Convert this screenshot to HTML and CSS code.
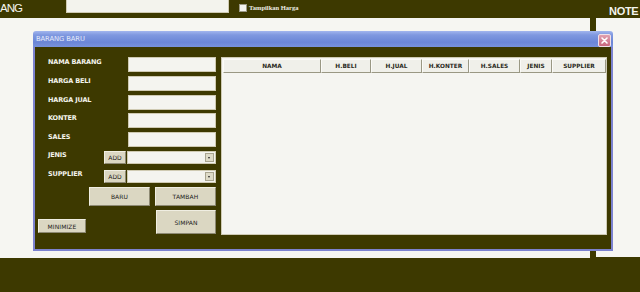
FILE: index.html
```html
<!DOCTYPE html>
<html>
<head>
<meta charset="utf-8">
<link rel="stylesheet" href="styles.css">
</head>
<body>
<div class="screen">
  <div class="topbar">
    <div class="cut-title">ANG</div>
    <div class="search"></div>
    <div class="check"><span class="box"></span><span class="check-label">Tampilkan Harga</span></div>
    <div class="note-title">NOTE</div>
  </div>
  <div class="main">
    <div class="panel-left"></div>
    <div class="panel-right"></div>
  </div>

  <div class="dialog">
    <div class="titlebar">
      <span class="title">BARANG BARU</span>
      <span class="close">
        <svg width="11" height="11" viewBox="0 0 11 11"><path d="M3 3 L8 8 M8 3 L3 8" stroke="#fff" stroke-width="1.6" stroke-linecap="round"/></svg>
      </span>
    </div>
    <div class="body">
      <div class="form">
        <div class="row r1"><span class="label">NAMA BARANG</span><span class="field"></span></div>
        <div class="row r2"><span class="label">HARGA BELI</span><span class="field"></span></div>
        <div class="row r3"><span class="label">HARGA JUAL</span><span class="field"></span></div>
        <div class="row r4"><span class="label">KONTER</span><span class="field"></span></div>
        <div class="row r5"><span class="label">SALES</span><span class="field"></span></div>
        <div class="row r6"><span class="label">JENIS</span><span class="btn add">ADD</span><span class="combo"><span class="arrow"></span></span></div>
        <div class="row r7"><span class="label">SUPPLIER</span><span class="btn add">ADD</span><span class="combo"><span class="arrow"></span></span></div>
        <div class="row r8"><span class="btn wide">BARU</span><span class="btn wide">TAMBAH</span></div>
        <div class="row r9"><span class="btn mini">MINIMIZE</span><span class="btn wide simpan">SIMPAN</span></div>
      </div>
      <div class="grid">
        <div class="head">
          <span class="th c1">NAMA</span>
          <span class="th c2">H.BELI</span>
          <span class="th c3">H.JUAL</span>
          <span class="th c4">H.KONTER</span>
          <span class="th c5">H.SALES</span>
          <span class="th c6">JENIS</span>
          <span class="th c7">SUPPLIER</span>
        </div>
      </div>
    </div>
  </div>
</div>
</body>
</html>
```

FILE: styles.css
```css
html, body {
  margin: 0;
  padding: 0;
}
body {
  background: #3d3900;
  width: 640px;
  height: 292px;
  overflow: hidden;
  font-family: "DejaVu Sans", Verdana, sans-serif;
}
.screen {
  position: relative;
  width: 640px;
  height: 292px;
  overflow: hidden;
}
.topbar {
  height: 18px;
  display: flex;
  align-items: flex-start;
}
.cut-title {
  width: 20px;
  font-family: "Liberation Sans", Arial, sans-serif;
  font-size: 11.5px;
  letter-spacing: -1px;
  color: #f4f4ee;
  line-height: 14px;
  padding-top: 1px;
  white-space: nowrap;
}
.search {
  margin-left: 46px;
  width: 161px;
  height: 12px;
  background: #f3f3ed;
  border: 1px solid #cfcab2;
  border-top: none;
}
.check {
  margin-left: 10px;
  margin-top: 4px;
  display: flex;
  align-items: center;
  gap: 2px;
}
.box {
  width: 6px;
  height: 6px;
  background: #f4f4f0;
  border: 1px solid #9c9a88;
}
.check-label {
  font-family: "Liberation Serif", "Times New Roman", serif;
  font-weight: bold;
  font-size: 6.5px;
  color: #ecece4;
  line-height: 8px;
}
.note-title {
  margin-left: auto;
  margin-top: 4px;
  font-family: "Liberation Sans", Arial, sans-serif;
  font-weight: bold;
  font-size: 11px;
  letter-spacing: -0.3px;
  color: #f4f4ee;
  line-height: 14px;
  width: 31px;
  white-space: nowrap;
}
.main {
  display: flex;
  gap: 6px;
}
.panel-left {
  width: 590px;
  height: 240px;
  background: #f6f6f2;
}
.panel-right {
  width: 44px;
  height: 239px;
  background: #f6f6f2;
}

/* dialog window on the desktop */
.dialog {
  position: absolute;
  left: 33px;
  top: 31px;
  width: 580px;
}
.titlebar {
  height: 16px;
  border-radius: 3px 3px 0 0;
  background: linear-gradient(#a2b6ee 0%, #7f98e0 25%, #6b86d6 70%, #7892dc 100%);
  display: flex;
  align-items: center;
  justify-content: space-between;
  padding: 0 2px 0 3px;
}
.title {
  font-family: "DejaVu Sans", Verdana, sans-serif;
  font-size: 6.8px;
  color: #e4eafa;
  letter-spacing: -0.1px;
}
.close {
  width: 11px;
  height: 11px;
  background: linear-gradient(#e0a0b0, #c8687e);
  border: 1px solid #f0e0e8;
  border-radius: 2px;
  display: flex;
  margin-top: 2px;
}
.body {
  background: #3d3900;
  border: 2px solid #7c82cf;
  border-top: none;
  height: 190px;
  display: flex;
  padding: 10px 4px 2px 3px;
  gap: 5px;
}
.form {
  width: 178px;
  display: flex;
  flex-direction: column;
}
.row {
  display: flex;
  align-items: flex-start;
}
.r1 { height: 15px; }
.r2 { height: 15px; margin-top: 4px; }
.r3 { height: 15px; margin-top: 4px; }
.r4 { height: 15px; margin-top: 3px; }
.r5 { height: 15px; margin-top: 4px; }
.r6 { height: 13px; margin-top: 4px; }
.r7 { height: 13px; margin-top: 6px; }
.r8 { height: 19px; margin-top: 4px; justify-content: flex-end; gap: 5px; }
.r9 { height: 24px; margin-top: 4px; justify-content: space-between; align-items: flex-end; }

.label {
  width: 80px;
  padding-left: 10px;
  padding-top: 1px;
  font-size: 6.5px;
  font-weight: bold;
  color: #f4f4ec;
  white-space: nowrap;
  letter-spacing: -0.15px;
}
.r6 .label, .r7 .label { width: 56px; padding-top: 0; }
.field {
  width: 86px;
  height: 13px;
  background: #f4f4ef;
  border: 1px solid #cfcab2;
}
.btn {
  box-sizing: border-box;
  background: #dbd7c2;
  border: 1px solid;
  border-color: #f0eee2 #8e8a74 #8e8a74 #f0eee2;
  font-size: 6px;
  color: #22221a;
  display: flex;
  align-items: center;
  justify-content: center;
  letter-spacing: 0.1px;
}
.add {
  width: 22px;
  height: 13px;
}
.combo {
  margin-left: 1px;
  width: 89px;
  height: 13px;
  box-sizing: border-box;
  background: #f4f4ef;
  border: 1px solid #cfcab2;
  display: flex;
  justify-content: flex-end;
  align-items: center;
  padding-right: 1px;
}
.arrow {
  width: 9px;
  height: 9px;
  box-sizing: border-box;
  background: #dedbc8;
  border: 1px solid #a9a590;
  position: relative;
}
.arrow::after {
  content: "";
  position: absolute;
  left: 2px;
  top: 3px;
  border-left: 1.5px solid transparent;
  border-right: 1.5px solid transparent;
  border-top: 2px solid #222;
}
.wide {
  width: 61px;
  height: 19px;
}
.simpan {
  width: 60px;
  height: 24px;
}
.mini {
  width: 48px;
  height: 14px;
  margin-bottom: 1px;
}

.grid {
  width: 384px;
  height: 176px;
  background: #f5f5f1;
  border: 1px solid #cfcbb5;
  padding: 0;
}
.head {
  display: flex;
  margin-top: 1px;
  margin-left: 1px;
}
.th {
  box-sizing: border-box;
  height: 14px;
  background: #f0f0ea;
  border: 1px solid;
  border-color: #fbfbf8 #9a9884 #9a9884 #fbfbf8;
  font-size: 5.8px;
  font-weight: bold;
  color: #2a2a22;
  display: flex;
  align-items: center;
  justify-content: center;
}
.c1 { width: 98px; }
.c2 { width: 50px; }
.c3 { width: 51px; }
.c4 { width: 47px; }
.c5 { width: 51px; }
.c6 { width: 32px; }
.c7 { width: 54px; }
```
